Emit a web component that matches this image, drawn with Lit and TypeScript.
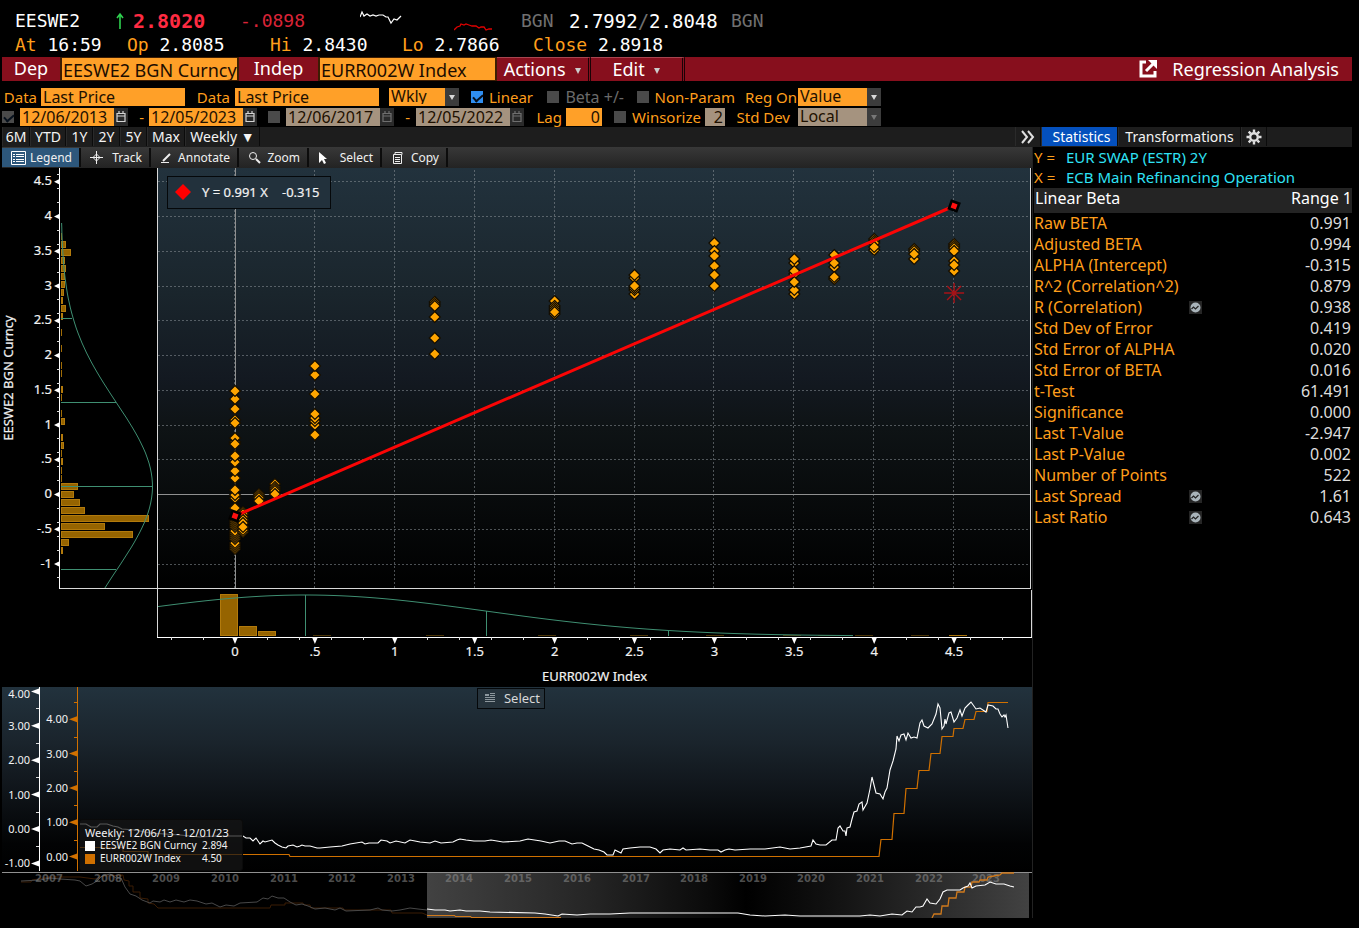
import { LitElement, html, svg, css } from "lit";
import { customElement, state } from "lit/decorators.js";
import { classMap } from "lit/directives/class-map.js";

type Pt = [number, number];

const BASE_WIDTH = 1032;

/** Shared behaviour for charts that redraw to the width they are given. */
class FluidChart extends LitElement {
  @state() protected w = BASE_WIDTH;
  private observer?: ResizeObserver;

  connectedCallback() {
    super.connectedCallback();
    this.observer = new ResizeObserver((entries) => {
      const next = Math.round(entries[0].contentRect.width);
      if (next > 0 && next !== this.w) this.w = next;
    });
    this.observer.observe(this);
  }

  disconnectedCallback() {
    this.observer?.disconnect();
    super.disconnectedCallback();
  }

  protected scaleFrom(origin: number, x: number) {
    return x <= origin ? x : origin + ((x - origin) * (this.w - origin)) / (BASE_WIDTH - origin);
  }

  protected path(points: Pt[], origin: number) {
    return points.map(([x, y], i) => `${i ? "L" : "M"}${this.scaleFrom(origin, x).toFixed(1)} ${y}`).join("");
  }
}

const POINTS: [number, number[]][] = [
  [0, [549, 547, 545, 543, 539, 537, 535, 533, 531, 527, 525, 523, 521, 519, 517, 498, 495, 508, 490, 478, 471, 462, 456, 442, 438, 444, 420, 423, 409, 399, 391]],
  [0.05, [512, 514, 517, 520, 532, 530, 523, 527]],
  [0.15, [494, 496, 498, 501]],
  [0.25, [484, 487, 489, 491, 494]],
  [0.5, [425, 421, 418, 414, 435, 394, 375, 366]],
  [1.25, [302, 304, 306, 317, 338, 354]],
  [2, [301, 306, 308, 314, 310, 312]],
  [2.5, [278, 275, 294, 290, 288, 286]],
  [3, [243, 251, 256, 266, 275, 286]],
  [3.5, [263, 259, 274, 271, 294, 290, 282]],
  [3.75, [255, 267, 263, 279, 277]],
  [4, [239, 241, 243, 250, 247]],
  [4.25, [249, 251, 259, 254]],
  [4.5, [244, 246, 248, 251, 261, 271, 265]],
];

/* Top of each bucket and its length, for the dependent variable. */
const Y_BARS: [number, number][] = [
  [233, 1], [241, 5], [249, 10], [257, 4], [265, 5], [273, 4], [281, 4], [289, 3], [297, 2], [305, 5], [313, 2],
  [329, 1], [345, 1], [362, 1], [370, 1], [386, 2], [394, 1], [410, 1], [418, 4], [434, 2], [442, 3], [450, 1],
  [458, 2], [467, 1], [475, 1], [483, 17], [491, 13], [499, 19], [507, 24], [515, 88], [523, 44], [531, 72], [539, 8], [547, 2],
];

/* Left edge and height of each bucket, for the independent variable. */
const X_BARS: [number, number][] = [
  [220, 42], [239, 10], [258, 5], [313, 1], [426, 1], [538, 1], [630, 1], [706, 1], [783, 1], [818, 1], [855, 1], [911, 1], [949, 1],
];

const tickLabel = (v: number) => String(v).replace("0.", ".");

@customElement("scatter-chart")
export class ScatterChart extends FluidChart {
  static styles = css`
    :host { display: block; min-width: 0; }
    svg { display: block; font: 13px "Noto Sans", "Open Sans", sans-serif; }
    .lbl { fill: #f2f2f2; stroke: #f2f2f2; stroke-width: 0.2; }
    .grid { stroke: #8a9298; stroke-opacity: 0.55; stroke-dasharray: 2 2; }
    .zero { stroke: #8f9090; }
    .frame { stroke: #d8d8d8; fill: none; }
    .axis { stroke: #fff; }
    .tick { stroke: #ddd; }
    .mark { fill: #fff; }
    .bar { fill: #966400; stroke: #b27a0c; }
    .bell { fill: none; stroke: #3f8f72; }
    .dot { fill: #ffa500; stroke: #120c00; stroke-width: 1.2; }
    .fit { stroke: #fb0505; stroke-width: 3; }
    .end { fill: #ff1010; stroke: #000; stroke-width: 2.6; }
    .star { stroke: #a81217; stroke-width: 1.4; }
    .key { fill: #22313c; stroke: #05080a; }
    .keymark { fill: #ff0000; }
  `;

  render() {
    const X = (x: number) => this.scaleFrom(157, x);
    const vx = (v: number) => X(235 + v * 159.8);
    const vy = (v: number) => 494 - v * 69.5;
    const right = X(1030);
    const yMajor = [4.5, 4, 3.5, 3, 2.5, 2, 1.5, 1, 0.5, 0, -0.5, -1];
    const xMajor = [0, 0.5, 1, 1.5, 2, 2.5, 3, 3.5, 4, 4.5];
    const yMinor = Array.from({ length: 30 }, (_, i) => -1.2 + i * 0.2).filter((v) => Math.abs(v * 2 - Math.round(v * 2)) > 0.01);
    const xMinor = Array.from({ length: 27 }, (_, i) => -0.4 + i * 0.2).filter((v) => Math.abs(v * 2 - Math.round(v * 2)) > 0.01);
    const bellY = Array.from({ length: 86 }, (_, i): Pt => {
      const y = 588 - i * 5 + (i === 85 ? 4 : 0);
      return [61 + 91.5 * Math.exp(-0.5 * ((y - 486.5) / 83.7) ** 2), y];
    }).filter((p) => p[1] > 222);
    const bellX = Array.from({ length: 88 }, (_, i): Pt => {
      const x = 157 + i * 8;
      return [x, 636 - 41 * Math.exp(-0.5 * ((x - 305.5) / 181) ** 2)];
    });
    return html`<svg width=${this.w} height="519" viewBox="0 168 ${this.w} 519" role="img" aria-label="Regression scatter">
      <defs>
        <linearGradient id="sky" x1="0" y1="0" x2="0" y2="1">
          <stop offset="0" stop-color="#22323d" />
          <stop offset="0.3" stop-color="#1a252c" />
          <stop offset="0.5" stop-color="#131921" />
          <stop offset="0.62" stop-color="#0e1315" />
          <stop offset="1" stop-color="#000" />
        </linearGradient>
      </defs>
      <rect x="157" y="168" width=${right - 157} height="420" fill="url(#sky)" />
      ${yMajor.map((v) => svg`<path class="grid" d="M158 ${Math.round(vy(v)) + 0.5}H${right}" />`)}
      ${xMajor.map((v) => svg`<path class="grid" d="M${Math.round(vx(v)) - 0.5} 170V588" />`)}
      <path class="zero" d="M${Math.round(vx(0)) + 0.5} 168V588M158 494.5H${right}" />
      ${Y_BARS.map(([y, n]) =>
        n < 2
          ? svg`<rect x="61" y=${y} width="1" height="7" fill="#a06c05" />`
          : svg`<rect class="bar" x="61.5" y=${y + 0.5} width=${n - 1} height="6" />`)}
      <path class="bell" d=${this.path(bellY, 157)} />
      <path class="bell" d="M61 318.5H72M61 402.5H116M61 486.5H152M61 569.5H116" />
      ${X_BARS.map(([x, h], i) =>
        h < 2
          ? svg`<rect x=${X(x)} y="635" width="18" height="1" fill=${i === X_BARS.length - 1 ? "#a87208" : "#4a3406"} />`
          : svg`<rect class="bar" x=${X(x) + 0.5} y=${636.5 - h} width="17" height=${h - 1} />`)}
      <path class="bell" d=${this.path(bellX, 157)} />
      <path class="bell" d="M${X(305.5)} 595V636M${X(486.5)} 611V636M${X(668.5)} 630V636" />
      <path class="frame" d="M157.5 168V637M${right + 0.5} 168V588M${right + 1.5} 590V637M60 588.5H${right + 1}" />
      <path class="axis" d="M59.5 168V589M157 637.5H${right + 2}" />
      ${yMinor.map((v) => svg`<path class="tick" d="M57 ${Math.round(vy(v)) + 0.5}h3" />`)}
      ${xMinor.map((v) => svg`<path class="tick" d="M${Math.round(vx(v)) + 0.5} 637v3" />`)}
      ${yMajor.map((v) => svg`
        <path class="mark" d="M54 ${vy(v) + 0.5}l6 -3v6z" />
        <text class="lbl" x="52" y=${vy(v) + 4} text-anchor="end">${tickLabel(v)}</text>`)}
      ${xMajor.map((v) => svg`
        <path class="mark" d="M${vx(v)} 644l-3 -7h6z" />
        <text class="lbl" x=${vx(v)} y="656" text-anchor="middle">${tickLabel(v)}</text>`)}
      ${POINTS.map(([v, ys]) => ys.map((y) => svg`<path class="dot" d="M${vx(v)} ${y - 5.5}l5.5 5.5l-5.5 5.5l-5.5 -5.5z" />`))}
      <path class="fit" d="M${vx(0)} 516L${vx(4.5)} 206" />
      <path class="star" d="M${vx(4.5) - 10} 293h20M${vx(4.5)} 283v20M${vx(4.5) - 7} 286l14 14M${vx(4.5) + 7} 286l-14 14" />
      ${[[vx(0), 516], [vx(4.5), 206]].map(([x, y]) => svg`<rect class="end" x=${x - 4} y=${y - 4} width="8" height="8" transform="rotate(20 ${x} ${y})" />`)}
      <rect class="key" x="167.5" y="176.5" width="163" height="32" />
      <path class="keymark" d="M183 184l8 8l-8 8l-8 -8z" />
      <text class="lbl" x="202" y="197">Y = 0.991 X</text>
      <text class="lbl" x="282" y="197">-0.315</text>
      <text class="lbl" x=${(this.w + 157) / 2} y="681" text-anchor="middle">EURR002W Index</text>
      <text class="lbl" transform="translate(13 378) rotate(-90)" text-anchor="middle">EESWE2 BGN Curncy</text>
    </svg>`;
  }
}

const SWAP: Pt[] = [
  [79, 824], [86, 824], [91, 827], [97, 827], [100, 824], [107, 824], [113, 826], [118, 827], [122, 829], [135, 830], [150, 833], [165, 834], [180, 835], [200, 837], [215, 836],
  [243, 836], [246, 838], [250, 838], [253, 841], [256, 838], [260, 844], [263, 841], [265, 842], [272, 840], [275, 843], [278, 845], [282, 847], [286, 848], [288, 846], [293, 845], [297, 847], [300, 846], [302, 845], [305, 846], [310, 846],
  [317, 848], [320, 848], [330, 847], [342, 846], [350, 844], [362, 842], [365, 844], [369, 843], [378, 843], [381, 840], [387, 841], [390, 843], [396, 841], [405, 843], [410, 840], [415, 841], [420, 842],
  [430, 843], [435, 841], [441, 843], [453, 842], [457, 840], [460, 839], [466, 840], [474, 841], [485, 841], [491, 840], [503, 842], [520, 841], [528, 839], [541, 841], [550, 843], [559, 841], [565, 841], [572, 844], [577, 843], [582, 843], [588, 846], [594, 849],
  [599, 850], [604, 852], [607, 855], [613, 855], [615, 850], [621, 853], [623, 849], [630, 848], [640, 847], [650, 847], [656, 849], [660, 853], [663, 850], [670, 849], [680, 850], [683, 848], [686, 850],
  [700, 849], [710, 850], [718, 850], [721, 852], [725, 850], [729, 849], [735, 850], [750, 849], [765, 849], [780, 847], [790, 849], [800, 848], [811, 846], [813, 840], [816, 844], [820, 845], [826, 845], [832, 840], [836, 840],
  [838, 828], [840, 826], [843, 831], [845, 831], [846, 836], [847, 828], [850, 827], [852, 819], [854, 812], [857, 811], [859, 804], [862, 802], [863, 810], [867, 803], [870, 789], [872, 777], [876, 793],
  [880, 794], [883, 799], [885, 792], [887, 788], [890, 770], [893, 761], [896, 749], [897, 736], [899, 741], [901, 735], [904, 734], [906, 740], [908, 733], [911, 738], [914, 737], [917, 738], [920, 723], [922, 720], [924, 726], [928, 728], [932, 724],
  [936, 714], [938, 704], [940, 708], [942, 729], [944, 726], [945, 719], [946, 724], [949, 713], [951, 712], [954, 722], [957, 718], [960, 710], [962, 716], [965, 708], [968, 705], [971, 702], [976, 709], [980, 708], [986, 712],
  [988, 705], [993, 706], [996, 709], [998, 709], [1000, 714], [1002, 717], [1004, 715], [1005, 717], [1006, 715], [1008, 728],
];

const RATE: Pt[] = [
  [79, 847.5], [123, 847.5], [123, 851.5], [148, 851.5], [148, 854.5], [289, 854.5], [290, 856.5], [879, 856.5], [881, 839.5], [892, 839.5], [894, 813.5], [904, 813.5], [906, 788.5], [917, 788.5],
  [919, 770.5], [929, 770.5], [931, 753.5], [940, 753.5], [942, 736.5], [953, 736.5], [954, 728.5], [963, 728.5], [965, 719.5], [974, 719.5], [976, 711.5], [987, 711.5], [988, 702.5], [1008, 702.5],
];

@customElement("history-chart")
export class HistoryChart extends FluidChart {
  static styles = css`
    :host { display: block; position: relative; min-width: 0; }
    svg { display: block; font: 11px "Noto Sans", "Open Sans", sans-serif; }
    .lbl { fill: #f2f2f2; }
    .swap { fill: none; stroke: #fff; stroke-width: 1.1; }
    .rate { fill: none; stroke: #d07000; stroke-width: 1.2; }
    .select {
      position: absolute; top: 1px; left: 50%; margin-left: -39px; height: 21px; width: 68px; padding: 0 4px 2px 7px;
      display: flex; align-items: center; justify-content: space-between;
      background: #26333c; border: 1px solid #05080a; color: #d8d8d8; font: 13px/16px "Noto Sans", sans-serif;
    }
    .legend {
      position: absolute; left: 79px; bottom: 1px; width: 164px; height: 52px; box-sizing: border-box; padding: 6px 5px 0;
      background: rgba(22, 22, 22, 0.72); border: 1px solid #0a0a0a; border-radius: 3px;
      color: #f2f2f2; font: 11px/13px "Noto Sans", sans-serif; white-space: nowrap;
    }
    .row { display: grid; grid-template-columns: 15px 102px auto; align-items: center; font-size: 10px; }
    .sw { width: 10px; height: 10px; background: #fff; }
    .sw.o { background: #d07000; }
  `;

  render() {
    return html`<svg width=${this.w} height="185" viewBox="0 687 ${this.w} 185" role="img" aria-label="Price history">
        <defs>
          <linearGradient id="dusk" x1="0" y1="0" x2="0" y2="1">
            <stop offset="0" stop-color="#22323d" />
            <stop offset="0.3" stop-color="#1a242c" />
            <stop offset="0.5" stop-color="#12181e" />
            <stop offset="0.85" stop-color="#020304" />
            <stop offset="1" stop-color="#000" />
          </linearGradient>
        </defs>
        <rect x="2" y="687" width=${this.w - 2} height="185" fill="url(#dusk)" />
        <path stroke="#fff" d="M39.5 687V871" />
        <path stroke="#d07000" d="M77.5 687V871" />
        ${[4, 3, 2, 1, 0, -1].map((v) => {
          const y = 829 - v * 34.4;
          return svg`<path fill="#fff" d="M31 ${y}l8 -3v6z" />
            <text class="lbl" x="30" y=${Math.max(y + 4, 698)} text-anchor="end">${v.toFixed(2)}</text>
            ${v > -1 ? svg`<path stroke="#ddd" d="M36 ${Math.round(y + 17) + 0.5}h3" />` : ""}`;
        })}
        ${[4, 3, 2, 1, 0].map((v) => {
          const y = 856.5 - v * 34.3;
          return svg`<path fill="#d07000" d="M69 ${y}l8 -3v6z" />
            <text class="lbl" x="68" y=${y + 4} text-anchor="end">${v.toFixed(2)}</text>
            <path stroke="#d07000" d="M74 ${Math.round(y - 17) + 0.5}h3" />`;
        })}
        <path class="rate" d=${this.path(RATE, 78)} />
        <path class="swap" d=${this.path(SWAP, 78)} />
      </svg>
      <button class="select">
        <svg width="11" height="10" viewBox="0 0 11 10"><path stroke="#8d979d" d="M0 1.5h4M5 .5h5M0 2.5h4M5 2.5h5M0 4.5h10M0 6.5h10M0 8.5h10" /></svg>
        Select
      </button>
      <div class="legend">
        <div>Weekly: 12/06/13 - 12/01/23</div>
        <div class="row"><span class="sw"></span><span>EESWE2 BGN Curncy</span><span>2.894</span></div>
        <div class="row"><span class="sw o"></span><span>EURR002W Index</span><span>4.50</span></div>
      </div>`;
  }
}

const NAV_SWAP_OLD: Pt[] = [
  [21, 881], [40, 880], [50, 878], [60, 879], [75, 880], [80, 881], [86, 886], [92, 884], [97, 881], [102, 876], [110, 874], [116, 878], [121, 878], [125, 887], [130, 894], [136, 896], [142, 900], [150, 903], [153, 901], [160, 902], [164, 900],
  [170, 902], [176, 900], [184, 902], [190, 900], [197, 901], [206, 904], [212, 903], [220, 907], [226, 905], [234, 906], [240, 903], [257, 902], [263, 898], [268, 899], [272, 896], [278, 898], [284, 898], [290, 902],
  [296, 905], [302, 904], [308, 906], [315, 909], [325, 908], [335, 910], [340, 908], [346, 911], [370, 910], [378, 908], [382, 910], [392, 911], [400, 910], [410, 908], [418, 909], [427, 910],
];
const NAV_RATE_OLD: Pt[] = [
  [21, 882], [31, 882], [32, 880], [50, 877], [80, 877], [95, 879], [100, 877], [105, 876], [123, 875], [124, 880], [129, 881], [129, 886], [133, 886], [133, 892], [140, 892], [140, 898], [148, 899], [148, 903], [154, 904], [158, 908], [270, 908],
  [271, 905], [285, 905], [285, 903], [303, 903], [304, 905], [310, 905], [311, 908], [343, 908], [344, 910], [391, 910], [392, 913], [422, 913], [427, 915],
];
const NAV_SWAP: Pt[] = [
  [427, 909], [435, 910], [445, 910], [450, 911], [460, 910], [466, 911], [480, 911], [490, 912], [535, 913], [545, 914], [558, 916], [562, 914], [577, 915], [590, 914], [610, 914], [630, 913], [738, 913], [750, 915], [765, 916],
  [785, 915], [800, 916], [860, 916], [870, 915], [880, 916], [892, 914], [902, 915], [907, 911], [912, 912], [916, 907], [920, 907], [923, 906], [927, 899], [930, 903], [936, 904], [940, 899], [943, 892], [947, 890],
  [960, 890], [963, 888], [968, 886], [970, 883], [972, 888], [976, 886], [985, 885], [990, 882], [996, 884], [1004, 884], [1010, 886], [1014, 887],
];
const NAV_RATE: Pt[] = [
  [932, 918], [934, 914], [941, 914], [942, 906], [948, 906], [949, 898], [956, 898], [957, 892], [964, 892], [965, 887], [971, 887], [972, 882], [979, 882], [980, 880], [987, 880], [988, 877], [994, 876], [1000, 875], [1002, 873], [1014, 873],
];

@customElement("range-navigator")
export class RangeNavigator extends FluidChart {
  static styles = css`
    :host { display: block; min-width: 0; }
    svg { display: block; font: bold 10px "DejaVu Sans", sans-serif; }
    .yr { fill: #909090; fill-opacity: 0.55; }
    path { fill: none; }
  `;

  render() {
    const X = (x: number) => this.scaleFrom(0, x);
    return html`<svg width=${this.w} height="46" viewBox="0 872 ${this.w} 46" role="img" aria-label="Range navigator">
      <defs>
        <linearGradient id="win">
          <stop offset="0" stop-color="#424242" />
          <stop offset="0.27" stop-color="#252525" />
          <stop offset="0.47" stop-color="#0a0a0a" />
          <stop offset="0.53" stop-color="#000" />
          <stop offset="0.7" stop-color="#151515" />
          <stop offset="1" stop-color="#424242" />
        </linearGradient>
      </defs>
      <rect x=${X(427)} y="873" width=${X(602)} height="45" fill="url(#win)" />
      <path stroke="#3a1c04" d=${this.path(NAV_RATE_OLD, 0)} />
      <path stroke="#484848" d=${this.path(NAV_SWAP_OLD, 0)} />
      ${[49, 108, 166, 225, 284, 342, 401, 459, 518, 577, 636, 694, 753, 811, 870, 929, 986].map(
        (x, i) => svg`<text class="yr" x=${X(x)} y="882" text-anchor="middle">${2007 + i}</text>`)}
      <path stroke="#909090" d="M2 872.5H${this.w}" />
      <path stroke="#d07a1c" d="M${X(427)} 915.5H${X(455)}V916.5H${X(471)}V917.5H${X(561)}" />
      <path stroke="#d07a1c" stroke-width="1.3" d=${this.path(NAV_RATE, 0)} />
      <path stroke="#fff" stroke-width="1.1" d=${this.path(NAV_SWAP, 0)} />
    </svg>`;
  }
}

const STATS: [string, string, boolean?][] = [
  ["Raw BETA", "0.991"], ["Adjusted BETA", "0.994"], ["ALPHA (Intercept)", "-0.315"], ["R^2 (Correlation^2)", "0.879"],
  ["R (Correlation)", "0.938", true], ["Std Dev of Error", "0.419"], ["Std Error of ALPHA", "0.020"], ["Std Error of BETA", "0.016"],
  ["t-Test", "61.491"], ["Significance", "0.000"], ["Last T-Value", "-2.947"], ["Last P-Value", "0.002"],
  ["Number of Points", "522"], ["Last Spread", "1.61", true], ["Last Ratio", "0.643", true],
];

@customElement("app-root")
export class AppRoot extends LitElement {
  static styles = css`
    :host { display: block; min-height: 100vh; background: #000; color: #fff; font: 15px/20px "Noto Sans", "Open Sans", sans-serif; }
    * { box-sizing: border-box; }
    button, input, select { font: inherit; color: inherit; border: 0; border-radius: 0; margin: 0; padding: 0; outline: 0; }
    button { background: none; white-space: nowrap; }
    .quote { padding: 9px 0 0 15px; font: 18px/24px "DejaVu Sans Mono", monospace; white-space: nowrap; }
    .line { display: grid; height: 24px; align-items: center; }
    .l1 { grid-template-columns: 99px 19px 107px 120px 94px 67px 48px 162px auto; }
    .l2 { grid-template-columns: 112px 143px 132px 131px auto; }
    .l2 b { font-weight: 400; color: #ff9e1b; }
    .price { color: #ff2b42; font-weight: 700; font-size: 20px; }
    .quoteval { font-size: 19px; }
    .chg { color: #ff2b42; opacity: 0.85; }
    .dim { color: #707070; }
    .bar { display: flex; height: 24px; margin: 0 7px 0 2px; background: #870f1d; font-size: 18px; line-height: 24px; }
    .bar label { padding-bottom: 2px; line-height: 22px; text-align: center; }
    .dep { width: 58px; }
    .indep { width: 79px; }
    .bar input { width: 179px; height: 24px; border: 1px solid #3d1d02; border-width: 1px 2px; background: #ffa028; color: #1c0d00; padding: 1px 0 0 1px; }
    .bar button { width: 94px; border-right: 3px double #1a0205; border-top: 1px solid #a94550; line-height: 21px; }
    .bar h1 { flex: 1; margin: 0; padding-right: 13px; font: inherit; line-height: 23px; display: flex; justify-content: flex-end; align-items: center; gap: 14px; }
    .tri { display: inline-block; margin-left: 5px; border: 3px solid transparent; border-top: 6px solid #ccc; border-bottom: 0; vertical-align: 2px; }
    .form { padding: 6px 0 0 2px; color: #ff9e1b; white-space: nowrap; }
    .fields { display: grid; justify-items: end; align-items: center; height: 20px; }
    .f1 { grid-template-columns: 35px 148px 45px 149px 80px 74px 91px 111px 62px 84px; }
    .f2 { grid-template-columns: 12px 114px 16px 113px 23px 114px 16px 114px 38px 40px 99px 24px 65px 91px; }
    .fields input:not([type="checkbox"]), .fields select { height: 18px; background: #ffa028; color: #1e1000; font-size: 16px; line-height: 18px; padding: 0 2px; }
    .text { width: 144px; }
    .fields .num { text-align: right; width: 36px; }
    .fields .two { width: 20px; }
    .fields .off, .fields .off input, .fields .off select { color: #6a6a6a; }
    .fields input.grey:not([type="checkbox"]), .fields select.grey { background: #a5937f; }
    .fields select { appearance: none; display: block; width: 100%; padding: 0 18px 2px 2px; line-height: 16px; }
    .combo { position: relative; display: block; height: 18px; }
    .wk { width: 70px; }
    .val { width: 83px; }
    .combo i { position: absolute; right: 0; top: 0; width: 14px; height: 18px; background: #3c3c3c; pointer-events: none; }
    .combo i::after { content: ""; position: absolute; left: 4px; top: 7px; border: 3px solid transparent; border-top: 5px solid #d8d8d8; border-bottom: 0; }
    .combo.offc i::after { border-top-color: #777; }
    .date { display: flex; }
    .date input { width: 94px; }
    .date button { width: 14px; height: 18px; background: #2a2a2a; display: grid; place-items: center; }
    .date.offc svg { opacity: 0.4; }
    .check { display: flex; align-items: center; gap: 6px; }
    .off { font-size: 16px; }
    input[type="checkbox"] { appearance: none; width: 12px; height: 12px; background: #4a4a4a; position: relative; }
    input.blue { background: #2f8ef0; }
    input[type="checkbox"]:checked::after { content: ""; position: absolute; left: 4px; top: 1px; width: 4px; height: 8px; border: solid #06101c; border-width: 0 2px 2px 0; transform: rotate(48deg); }
    .tabs { display: flex; height: 20px; padding-bottom: 1px; margin: 0 7px 0 2px; background: #1d1d1d; font-size: 14px; }
    .tabs button { border-right: 1px solid #0b0b0b; border-left: 1px solid #2a2a2a; line-height: 18px; padding: 0; color: #f4f4f4; }
    .t28 { width: 28px; } .t36 { width: 36px; } .t27 { width: 27px; } .t38 { width: 38px; } .t75 { width: 75px; }
    .t26 { width: 26px; display: grid; place-items: center; }
    .t77 { width: 77px; }
    .t123 { width: 123px; }
    .t85 { width: 85px; }
    .spring { flex: 1; }
    .tabs button.on { background: #0450bd; color: #fff; padding-left: 4px; }
    .main { display: grid; grid-template-columns: minmax(0, 1fr) 327px; }
    .left { border-right: 1px solid #222; margin-right: -1px; }
    .tools { display: flex; height: 21px; padding-top: 1px; margin-left: 2px; background: linear-gradient(#383838, #232323); font-size: 12px; }
    .tools button { display: flex; align-items: center; justify-content: space-between; height: 19px; border-right: 2px solid #0c0c0c; padding: 0 7px 0 9px; color: #f0f0f0; }
    .tools .hot { background: #2d577b; }
    .k79 { width: 79px; } .k70 { width: 70px; } .k88 { width: 88px; } .k73 { width: 73px; } .k66 { width: 66px; }
    .side { padding: 0 7px 0 2px; }
    .who { margin: 0; padding-bottom: 1px; display: grid; grid-template-columns: 32px 1fr; color: #ff9e1b; }
    .who dd { margin: 0; color: #2fe3f5; white-space: nowrap; }
    table { width: 100%; border-collapse: collapse; font-size: 16px; line-height: 21px; table-layout: fixed; }
    th, td { padding: 0; font-weight: 400; text-align: left; height: 21px; color: #ff9e1b; white-space: nowrap; }
    .ci { width: 24px; } .cv { width: 139px; }
    thead th { background: #242424; color: #fff; height: 25px; padding: 0 0 4px 1px; }
    thead th:last-child, td:last-child { text-align: right; }
    td:last-child { color: #ddd; padding-right: 1px; }
    td svg { display: block; }
  `;

  private date(id: string, value: string, off = false) {
    return html`<span class=${classMap({ date: true, offc: off })}>
      <input class=${off ? "grey" : ""} id=${id} aria-label="Date" .value=${value} />
      <button aria-label="Open calendar"><svg width="10" height="12" viewBox="0 0 10 12"><path fill="none" stroke="#d5d5d5" stroke-width="1.2" d="M1 2.5h8v8H1zM1 5h8M3 0v3M7 0v3" /></svg></button>
    </span>`;
  }

  private combo(cls: string, label: string, value: string, off = false) {
    return html`<span class=${classMap({ combo: true, [cls]: true, offc: off })}>
      <select class=${off ? "grey" : ""} aria-label=${label}><option>${value}</option></select><i></i>
    </span>`;
  }

  render() {
    return html`
      <header class="quote">
        <div class="line l1">
          <span>EESWE2</span>
          <svg width="12" height="18" viewBox="0 0 12 18"><path fill="none" stroke="#2fd04f" stroke-width="1.6" d="M6 17V2M3 6l3 -4l3 4" /></svg>
          <span class="price">2.8020</span>
          <span class="chg">-.0898</span>
          <svg width="42" height="24" viewBox="0 0 42 24"><path fill="none" stroke="#fff" stroke-width="1.2" d="M0 8l2 -5l2 4l3 -2l3 2l3 -1l3 1l3 -1l4 0l3 2l2 0l3 6l3 -4l3 1l3 -3l1 -1" /></svg>
          <svg width="42" height="24" viewBox="0 0 42 24"><path fill="none" stroke="#e00000" stroke-width="1.3" d="M0 21l3 -3l3 -1l1 -2l3 1l2 -1l3 1l3 1l4 0l3 2l2 -1l3 0l2 3l3 -1l3 0" /></svg>
          <span class="dim">BGN</span>
          <span class="quoteval">2.7992<span class="dim">/</span>2.8048</span>
          <span class="dim">BGN</span>
        </div>
        <div class="line l2">
          <span><b>At</b> 16:59</span><span><b>Op</b> 2.8085</span><span><b>Hi</b> 2.8430</span><span><b>Lo</b> 2.7866</span><span><b>Close</b> 2.8918</span>
        </div>
      </header>
      <div class="bar">
        <label class="dep" for="dep">Dep</label><input id="dep" .value=${"EESWE2 BGN Curncy"} />
        <label class="indep" for="indep">Indep</label><input id="indep" .value=${"EURR002W Index"} />
        <button>Actions <span class="tri"></span></button>
        <button>Edit <span class="tri"></span></button>
        <h1><svg width="20" height="20" viewBox="0 0 20 20"><path fill="none" stroke="#fff" stroke-width="3" d="M8 3H3v14h14v-5M8 12l7 -7" /><path fill="#fff" d="M10 1h9v9z" /></svg>Regression Analysis</h1>
      </div>
      <div class="form">
        <div class="fields f1">
          <label for="d1">Data</label><input class="text" id="d1" .value=${"Last Price"} />
          <label for="d2">Data</label><input class="text" id="d2" .value=${"Last Price"} />
          ${this.combo("wk", "Period", "Wkly")}
          <label class="check"><input class="blue" type="checkbox" checked />Linear</label>
          <label class="check off"><input type="checkbox" />Beta +/-</label>
          <label class="check"><input type="checkbox" />Non-Param</label>
          <span>Reg On</span>
          ${this.combo("val", "Regress on", "Value")}
        </div>
        <div class="fields f2">
          <input type="checkbox" checked aria-label="Range 1" />
          ${this.date("a", "12/06/2013")}<span>-</span>${this.date("b", "12/05/2023")}
          <input type="checkbox" aria-label="Range 2" />
          ${this.date("c", "12/06/2017", true)}<span>-</span>${this.date("d", "12/05/2022", true)}
          <label for="lag">Lag</label><input class="num" id="lag" .value=${"0"} />
          <label class="check"><input type="checkbox" />Winsorize</label>
          <input class="num two grey" id="sd" .value=${"2"} /><label for="sd">Std Dev</label>
          ${this.combo("val", "Currency", "Local", true)}
        </div>
      </div>
      <nav class="tabs">
        <button class="t28">6M</button><button class="t36">YTD</button><button class="t27">1Y</button><button class="t27">2Y</button>
        <button class="t27">5Y</button><button class="t38">Max</button><button class="t75">Weekly ▼</button>
        <span class="spring"></span>
        <button class="t26" aria-label="Collapse"><svg width="14" height="14" viewBox="0 0 14 14"><path fill="none" stroke="#e0e0e0" stroke-width="2" d="M1 1l5 6l-5 6M7 1l5 6l-5 6" /></svg></button>
        <button class="t77 on">Statistics</button><button class="t123">Transformations</button>
        <button class="t26" aria-label="Settings"><svg width="16" height="16" viewBox="0 0 16 16"><g fill="none" stroke="#e0e0e0"><circle cx="8" cy="8" r="3.8" stroke-width="2.4" /><path stroke-width="2.4" d="M8 .5v3M8 12.500v3M.5 8h3M12.500 8h3M2.700 2.700l2 2M11.300 11.300l2 2M13.300 2.700l-2 2M4.700 11.300l-2 2" /></g></svg></button>
        <span class="t85"></span>
      </nav>
      <div class="main">
        <div class="left">
          <div class="tools">
            <button class="k79 hot"><svg width="15" height="14" viewBox="0 0 15 14"><path fill="none" stroke="#fff" d="M.5 .5h14v13H.5zM2 3.500h2M5 3.500h8M2 5.500h2M5 5.500h8M2 8.500h2M5 8.500h8M2 10.500h2M5 10.500h8" /></svg>Legend</button>
            <button class="k70"><svg width="13" height="13" viewBox="0 0 13 13"><path fill="none" stroke="#eee" d="M6.500 0v13M0 6.500h13M6.500 3l3.500 3.500l-3.500 3.500l-3.500 -3.500z" /></svg>Track</button>
            <button class="k88"><svg width="13" height="12" viewBox="0 0 13 12"><path fill="none" stroke="#eee" d="M1 10.500h8" /><path fill="none" stroke="#eee" stroke-width="2" d="M3 9l7 -7" /></svg>Annotate</button>
            <button class="k70"><svg width="14" height="13" viewBox="0 0 14 13"><circle cx="5" cy="5" r="3.500" fill="none" stroke="#eee" /><path stroke="#eee" stroke-width="2" d="M8 8l4 4" /></svg>Zoom</button>
            <button class="k73"><svg width="10" height="14" viewBox="0 0 10 14"><path fill="#fff" d="M1 1v11l3 -3l2 4l2 -1l-2 -4h3z" /></svg>Select</button>
            <button class="k66"><svg width="13" height="14" viewBox="0 0 13 14"><path fill="none" stroke="#eee" d="M4 3.500V1.500h7v2M2.500 3.500h8v9h-8zM4 6.500h5M4 8.500h5M4 10.500h5" /></svg>Copy</button>
          </div>
          <scatter-chart></scatter-chart>
          <history-chart></history-chart>
          <range-navigator></range-navigator>
        </div>
        <aside class="side">
          <dl class="who"><dt>Y =</dt><dd>EUR SWAP (ESTR) 2Y</dd><dt>X =</dt><dd>ECB Main Refinancing Operation</dd></dl>
          <table>
            <colgroup><col /><col class="ci" /><col class="cv" /></colgroup>
            <thead><tr><th colspan="2">Linear Beta</th><th>Range 1</th></tr></thead>
            <tbody>
              ${STATS.map(([name, value, chart]) => html`<tr><td>${name}</td><td>${chart
                ? html`<svg width="13" height="13" viewBox="0 0 13 13"><rect width="13" height="13" fill="#262626" /><circle cx="6.500" cy="6.500" r="5" fill="#a9b4ba" /><path fill="none" stroke="#222" stroke-width="1.200" d="M2.500 8l2 -2l2 2l3 -3" /></svg>`
                : ""}</td><td>${value}</td></tr>`)}
            </tbody>
          </table>
        </aside>
      </div>`;
  }
}
